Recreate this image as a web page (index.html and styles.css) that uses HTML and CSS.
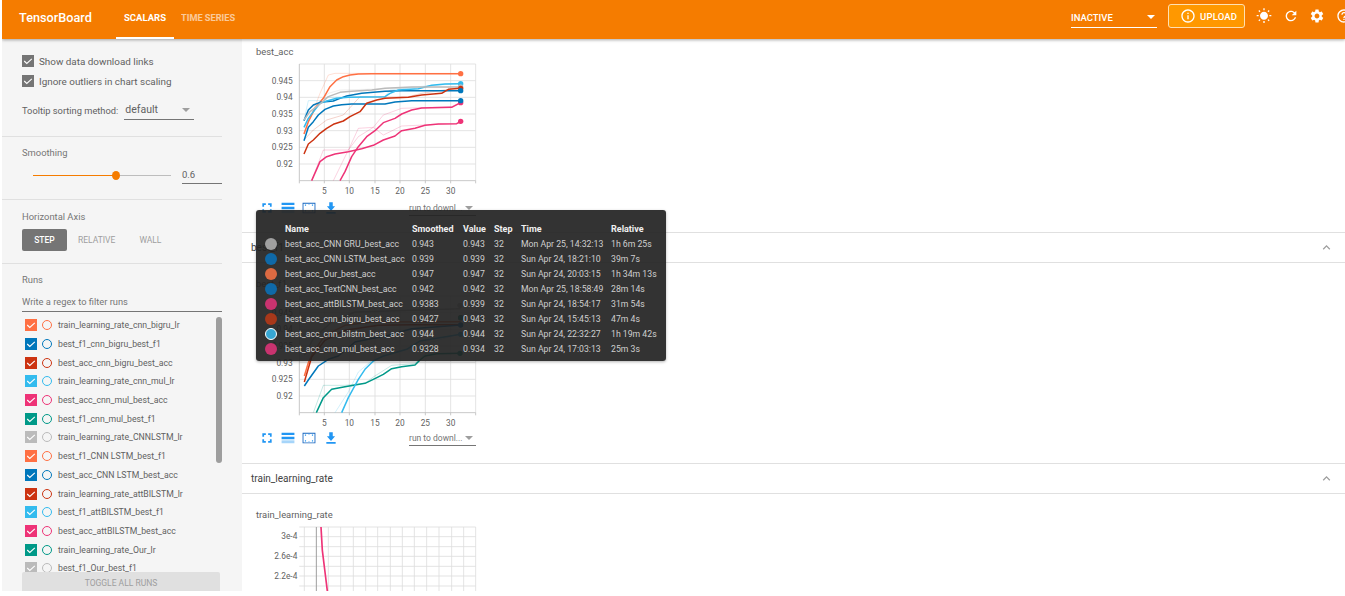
FILE: index.html
```html
<!DOCTYPE html>
<html lang="en">
<head>
    <meta charset="UTF-8">
    <meta name="viewport" content="width=device-width, initial-scale=1.0">
    <title>TensorBoard</title>
    <link rel="stylesheet" href="styles.css">
</head>
<body>
    <svg class="defs" aria-hidden="true">
        <symbol id="i-expand" viewBox="0 0 24 24"><path d="M7 14H4v6h6v-3H7v-3zm-3-4h3V7h3V4H4v6zm13 7h-3v3h6v-6h-3v3zM14 4v3h3v3h3V4h-6z"/></symbol>
        <symbol id="i-lines" viewBox="0 0 24 24"><path d="M1 3h22v4H1zM1 10h22v4H1z"/><path opacity="0.4" d="M1 16h22v5H1z"/></symbol>
        <symbol id="i-fit" viewBox="0 0 24 24"><path fill="#1565c0" d="M1 3h22v18H1zm1.5 1.5v15h19v-15z"/><path d="M5 6h2v2H5zM17 6h2v2h-2zM5 16h2v2H5zM17 16h2v2h-2zM11 6h2v1h-2zM11 17h2v1h-2z"/></symbol>
        <symbol id="i-download" viewBox="0 0 24 24"><path d="M19 9h-4V2H9v7H5l7 8 7-8zM4 19v3h16v-3H4z"/></symbol>
        <symbol id="i-chevron" viewBox="0 0 24 24"><path d="M7.41 15.41L12 10.83l4.59 4.58L18 14l-6-6-6 6z"/></symbol>
        <symbol id="i-check" viewBox="0 0 12 12"><path d="M2.2 6l2.6 2.5 5-4.6" fill="none" stroke="#fff" stroke-width="1.1"/></symbol>
        <symbol id="grid" viewBox="0 60 720 414">
            <g class="grid">
                <path d="M163 72H692M163 122H692M163 172H692M163 222H692M163 272H692M163 322H692M163 372H692"/>
                <path d="M238 72V422M313 72V422M390 72V422M465 72V422M541 72V422M617 72V422M692 72V422"/>
            </g>
            <path class="axis" d="M163 72V422H692M238 422v8M313 422v8M390 422v8M465 422v8M541 422v8M617 422v8M692 422v8M163 422v8"/>
        </symbol>
    </svg>

    <div class="app">
        <header class="topbar">
            <div class="logo">TensorBoard</div>
            <div class="tab active">SCALARS</div>
            <div class="tab">TIME SERIES</div>
            <div class="topbar-right">
                <div class="inactive"><span>INACTIVE</span><i class="arrow"></i></div>
                <div class="upload">
                    <svg viewBox="0 0 24 24"><path d="M11 7h2v2h-2zm0 4h2v6h-2zm1-9C6.48 2 2 6.48 2 12s4.48 10 10 10 10-4.48 10-10S17.52 2 12 2zm0 18c-4.41 0-8-3.59-8-8s3.59-8 8-8 8 3.59 8 8-3.59 8-8 8z"/></svg>
                    <span>UPLOAD</span>
                </div>
                <svg class="top-icon" viewBox="0 0 24 24"><path d="M6.76 4.84l-1.8-1.79-1.41 1.41 1.79 1.79 1.42-1.41zM4 10.5H1v2h3v-2zm9-9.95h-2V3.5h2V.55zm7.45 3.91l-1.41-1.41-1.79 1.79 1.41 1.41 1.79-1.79zm-3.21 13.7l1.79 1.8 1.41-1.41-1.8-1.79-1.4 1.4zM20 10.5v2h3v-2h-3zm-8-5c-3.31 0-6 2.69-6 6s2.69 6 6 6 6-2.69 6-6-2.69-6-6-6zm-1 16.95h2V19.5h-2v2.95zm-7.45-3.91l1.41 1.41 1.79-1.8-1.41-1.41-1.79 1.8z"/></svg>
                <svg class="top-icon" viewBox="0 0 24 24"><path d="M17.65 6.35C16.2 4.9 14.21 4 12 4c-4.42 0-7.99 3.58-7.99 8s3.57 8 7.99 8c3.73 0 6.84-2.55 7.73-6h-2.08c-.82 2.33-3.04 4-5.65 4-3.31 0-6-2.69-6-6s2.69-6 6-6c1.66 0 3.14.69 4.22 1.78L13 11h7V4l-2.35 2.35z"/></svg>
                <svg class="top-icon" viewBox="0 0 24 24"><path d="M19.14 12.94c.04-.3.06-.61.06-.94 0-.32-.02-.64-.07-.94l2.03-1.58c.18-.14.23-.41.12-.61l-1.92-3.32c-.12-.22-.37-.29-.59-.22l-2.39.96c-.5-.38-1.03-.7-1.62-.94l-.36-2.54c-.04-.24-.24-.41-.48-.41h-3.84c-.24 0-.43.17-.47.41l-.36 2.54c-.59.24-1.13.57-1.62.94l-2.39-.96c-.22-.08-.47 0-.59.22L2.74 8.87c-.12.21-.08.47.12.61l2.03 1.58c-.05.3-.09.63-.09.94s.02.64.07.94l-2.03 1.58c-.18.14-.23.41-.12.61l1.92 3.32c.12.22.37.29.59.22l2.39-.96c.5.38 1.03.7 1.62.94l.36 2.54c.05.24.24.41.48.41h3.84c.24 0 .44-.17.47-.41l.36-2.54c.59-.24 1.13-.56 1.62-.94l2.39.96c.22.08.47 0 .59-.22l1.92-3.32c.12-.22.07-.47-.12-.61l-2.01-1.58zM12 15.6c-1.98 0-3.6-1.62-3.6-3.6s1.62-3.6 3.6-3.6 3.6 1.62 3.6 3.6-1.62 3.6-3.6 3.6z"/></svg>
                <svg class="top-icon" viewBox="0 0 24 24"><path d="M11 18h2v-2h-2v2zm1-16C6.48 2 2 6.48 2 12s4.48 10 10 10 10-4.48 10-10S17.52 2 12 2zm0 18c-4.41 0-8-3.59-8-8s3.59-8 8-8 8 3.59 8 8-3.59 8-8 8zm0-14c-2.21 0-4 1.79-4 4h2c0-1.1.9-2 2-2s2 .9 2 2c0 2-3 1.75-3 5h2c0-2.25 3-2.5 3-5 0-2.21-1.79-4-4-4z"/></svg>
            </div>
        </header>

        <div class="layout">
            <aside class="sidebar">
                <section class="panel panel-options">
                    <label class="option"><span class="box c-grey-dark"><svg><use href="#i-check"/></svg></span>Show data download links</label>
                    <label class="option"><span class="box c-grey-dark"><svg><use href="#i-check"/></svg></span>Ignore outliers in chart scaling</label>
                    <div class="sort-row">
                        <span>Tooltip sorting method:</span>
                        <div class="sort-select"><span>default</span><i class="arrow"></i></div>
                    </div>
                </section>
                <section class="panel panel-smoothing">
                    <div class="panel-title">Smoothing</div>
                    <div class="slider-row">
                        <div class="slider"><div class="slider-fill"></div><div class="slider-thumb"></div></div>
                        <div class="slider-value">0.6</div>
                    </div>
                </section>
                <section class="panel panel-axis">
                    <div class="panel-title">Horizontal Axis</div>
                    <div class="axis-buttons">
                        <div class="axis-btn active">STEP</div>
                        <div class="axis-btn relative">RELATIVE</div>
                        <div class="axis-btn wall">WALL</div>
                    </div>
                </section>
                <section class="panel-runs">
                    <div class="panel-title">Runs</div>
                    <div class="filter">Write a regex to filter runs</div>
                    <div class="run-list">
                        <div class="scrollbar"></div>
                        <div class="run c-orange"><span class="box"><svg><use href="#i-check"/></svg></span><span class="dot"></span>train_learning_rate_cnn_bigru_lr</div>
                        <div class="run c-blue"><span class="box"><svg><use href="#i-check"/></svg></span><span class="dot"></span>best_f1_cnn_bigru_best_f1</div>
                        <div class="run c-red"><span class="box"><svg><use href="#i-check"/></svg></span><span class="dot"></span>best_acc_cnn_bigru_best_acc</div>
                        <div class="run c-cyan"><span class="box"><svg><use href="#i-check"/></svg></span><span class="dot"></span>train_learning_rate_cnn_mul_lr</div>
                        <div class="run c-pink"><span class="box"><svg><use href="#i-check"/></svg></span><span class="dot"></span>best_acc_cnn_mul_best_acc</div>
                        <div class="run c-teal"><span class="box"><svg><use href="#i-check"/></svg></span><span class="dot"></span>best_f1_cnn_mul_best_f1</div>
                        <div class="run c-grey"><span class="box"><svg><use href="#i-check"/></svg></span><span class="dot"></span>train_learning_rate_CNNLSTM_lr</div>
                        <div class="run c-orange"><span class="box"><svg><use href="#i-check"/></svg></span><span class="dot"></span>best_f1_CNN LSTM_best_f1</div>
                        <div class="run c-blue"><span class="box"><svg><use href="#i-check"/></svg></span><span class="dot"></span>best_acc_CNN LSTM_best_acc</div>
                        <div class="run c-red"><span class="box"><svg><use href="#i-check"/></svg></span><span class="dot"></span>train_learning_rate_attBILSTM_lr</div>
                        <div class="run c-cyan"><span class="box"><svg><use href="#i-check"/></svg></span><span class="dot"></span>best_f1_attBILSTM_best_f1</div>
                        <div class="run c-pink"><span class="box"><svg><use href="#i-check"/></svg></span><span class="dot"></span>best_acc_attBILSTM_best_acc</div>
                        <div class="run c-teal"><span class="box"><svg><use href="#i-check"/></svg></span><span class="dot"></span>train_learning_rate_Our_lr</div>
                        <div class="run c-grey"><span class="box"><svg><use href="#i-check"/></svg></span><span class="dot"></span>best_f1_Our_best_f1</div>
                    </div>
                    <div class="toggle-all">TOGGLE ALL RUNS</div>
                </section>
            </aside>

            <main class="main">
                <div class="card">
                    <div class="card-title">best_acc</div>
                    <svg class="chart" viewBox="33 60 687 414">
                        <use href="#grid" x="0" y="60" width="720" height="414"/>
                        <g class="ticks">
                            <text x="143" y="131">0.945</text>
                            <text x="143" y="181">0.94</text>
                            <text x="143" y="231">0.935</text>
                            <text x="143" y="281">0.93</text>
                            <text x="143" y="331">0.925</text>
                            <text x="143" y="381">0.92</text>
                        </g>
                        <g class="ticks-x">
                            <text x="238" y="462">5</text>
                            <text x="313" y="462">10</text>
                            <text x="390" y="462">15</text>
                            <text x="465" y="462">20</text>
                            <text x="541" y="462">25</text>
                            <text x="617" y="462">30</text>
                        </g>
                        <g class="faint">
                            <polyline class="s-orange" points="177,280 200,225 225,160 250,105 270,100 650,100"/>
                            <polyline class="s-grey" points="177,240 195,205 225,185 250,160 285,150 650,140"/>
                            <polyline class="s-cyan" points="177,240 190,182 225,182 245,172 420,170 435,150 520,140 650,130"/>
                            <polyline class="s-red" points="177,300 205,270 245,240 295,225 345,170 395,172 490,170 530,160 650,142"/>
                            <polyline class="s-pink" points="200,422 235,330 310,330 340,290 385,262 415,285 470,258 650,250"/>
                            <polyline class="s-pink" points="265,422 315,320 340,265 385,262 415,225 470,205 620,200 650,185"/>
                        </g>
                        <polyline class="s-orange" points="177,282 190,245 210,205 235,175 255,140 275,120 295,110 315,105 340,102 380,101 647,101"/>
                        <polyline class="s-blue" points="177,302 190,262 205,245 220,225 240,208 265,198 290,194 320,192 420,192 450,186 500,182 647,182"/>
                        <polyline class="s-blue" points="177,242 190,210 205,195 225,187 265,183 285,175 305,168 350,160 420,154 470,152 647,152"/>
                        <polyline class="s-cyan" points="177,262 190,235 205,215 225,190 245,183 275,175 310,172 420,170 435,160 460,150 520,146 560,136 600,132 647,131"/>
                        <polyline class="s-grey" points="177,240 195,215 225,192 250,170 285,157 320,154 380,150 420,145 500,141 647,141"/>
                        <polyline class="s-red" points="177,342 190,312 205,300 225,280 245,265 265,253 295,243 315,230 345,215 365,190 395,180 420,175 490,172 530,165 590,160 610,148 647,145"/>
                        <polyline class="s-pink" points="285,422 300,395 320,350 340,320 365,290 390,272 415,248 450,235 470,222 500,210 530,204 620,202 647,188"/>
                        <polyline class="s-pink" points="200,422 225,365 245,350 270,342 310,335 350,326 385,316 415,300 450,288 470,272 510,265 540,256 580,252 635,251 647,244"/>
                        <circle class="d-orange" cx="647" cy="101" r="8"/>
                        <circle class="d-cyan" cx="647" cy="131" r="8"/>
                        <circle class="d-grey" cx="647" cy="141" r="8"/>
                        <circle class="d-red" cx="647" cy="145" r="8"/>
                        <circle class="d-blue" cx="647" cy="152" r="8"/>
                        <circle class="d-pink" cx="647" cy="188" r="8"/>
                        <circle class="d-blue" cx="647" cy="182" r="8"/>
                        <circle class="d-pink" cx="647" cy="244" r="8"/>
                    </svg>
                    <div class="chart-tools">
                        <svg class="tool"><use href="#i-expand"/></svg>
                        <svg class="tool"><use href="#i-lines"/></svg>
                        <svg class="tool"><use href="#i-fit"/></svg>
                        <svg class="tool"><use href="#i-download"/></svg>
                        <div class="download-select"><span>run to downl...</span><i class="arrow"></i></div>
                    </div>
                </div>

                <div class="section-head"><span>best_f1</span><svg><use href="#i-chevron"/></svg></div>
                <div class="card card-f1">
                    <div class="card-title">best_f1</div>
                    <svg class="chart" viewBox="33 60 687 414">
                        <use href="#grid" x="0" y="60" width="720" height="414"/>
                        <g class="ticks">
                            <text x="143" y="131">0.945</text>
                            <text x="143" y="181">0.94</text>
                            <text x="143" y="231">0.935</text>
                            <text x="143" y="281">0.93</text>
                            <text x="143" y="331">0.925</text>
                            <text x="143" y="381">0.92</text>
                        </g>
                        <g class="ticks-x">
                            <text x="238" y="462">5</text>
                            <text x="313" y="462">10</text>
                            <text x="390" y="462">15</text>
                            <text x="465" y="462">20</text>
                            <text x="541" y="462">25</text>
                            <text x="617" y="462">30</text>
                        </g>
                        <g class="faint">
                            <polyline class="s-teal" points="205,422 235,340 300,340 360,334 385,315 440,280 510,275 540,245 647,244"/>
                            <polyline class="s-cyan" points="270,422 310,360 340,300 385,262 647,185"/>
                        </g>
                        <polyline class="s-grey" points="178,250 205,200 260,150 330,120 647,110"/>
                        <polyline class="s-orange" points="178,312 190,272 205,240 240,190 300,160 380,150 647,149"/>
                        <polyline class="s-red" points="178,330 200,255 240,205 300,175 400,160 500,158 647,158"/>
                        <polyline class="s-blue" points="178,342 190,324 220,282 250,262 280,252 330,210 430,190 500,170 647,159"/>
                        <polyline class="s-teal" points="214,422 235,377 260,352 300,344 360,334 385,322 415,307 440,290 470,284 510,279 525,264 540,252 575,245 647,244"/>
                        <polyline class="s-cyan" points="290,422 310,377 340,322 360,292 385,267 415,252 485,232 525,207 647,187"/>
                        <circle class="d-grey" cx="645" cy="100" r="8"/>
                        <circle class="d-red" cx="647" cy="137" r="8"/>
                        <circle class="d-teal" cx="647" cy="137" r="8"/>
                        <circle class="d-blue" cx="647" cy="159" r="8"/>
                        <circle class="d-cyan" cx="647" cy="187" r="8"/>
                        <circle class="d-teal" cx="645" cy="244" r="8"/>
                    </svg>
                    <div class="chart-tools">
                        <svg class="tool"><use href="#i-expand"/></svg>
                        <svg class="tool"><use href="#i-lines"/></svg>
                        <svg class="tool"><use href="#i-fit"/></svg>
                        <svg class="tool"><use href="#i-download"/></svg>
                        <div class="download-select"><span>run to downl...</span><i class="arrow"></i></div>
                    </div>
                </div>

                <div class="section-head"><span>train_learning_rate</span><svg><use href="#i-chevron"/></svg></div>
                <div class="card">
                    <div class="card-title">train_learning_rate</div>
                    <svg class="chart-lr" viewBox="33 183 687 210">
                        <g class="grid">
                            <path d="M178 195V400M250 195V400M287 195V400M325 195V400M362 195V400M398 195V400M436 195V400M472 195V400M508 195V400M545 195V400M582 195V400M620 195V400M656 195V400M692 195V400"/>
                            <path d="M163 195H692M163 224H692M163 254H692M163 283H692M163 313H692M163 342H692M163 372H692"/>
                        </g>
                        <path class="lr-axis" d="M214 195V400"/>
                        <g class="ticks">
                            <text x="157" y="232">3e-4</text>
                            <text x="157" y="291">2.6e-4</text>
                            <text x="157" y="350">2.2e-4</text>
                        </g>
                        <polyline class="s-pink" points="228,195 232,265 240,330 248,395"/>
                    </svg>
                </div>
            </main>
        </div>

        <div class="tooltip">
            <table>
                <colgroup>
                    <col class="col-swatch"><col class="col-name"><col class="col-smoothed"><col class="col-value"><col class="col-step"><col class="col-time"><col class="col-relative">
                </colgroup>
                <tr><th></th><th>Name</th><th>Smoothed</th><th>Value</th><th>Step</th><th>Time</th><th>Relative</th></tr>
                <tr><td><span class="swatch sw-grey"></span></td><td>best_acc_CNN GRU_best_acc</td><td>0.943</td><td>0.943</td><td>32</td><td>Mon Apr 25, 14:32:13</td><td>1h 6m 25s</td></tr>
                <tr><td><span class="swatch sw-blue"></span></td><td>best_acc_CNN LSTM_best_acc</td><td>0.939</td><td>0.939</td><td>32</td><td>Sun Apr 24, 18:21:10</td><td>39m 7s</td></tr>
                <tr><td><span class="swatch sw-orange"></span></td><td>best_acc_Our_best_acc</td><td>0.947</td><td>0.947</td><td>32</td><td>Sun Apr 24, 20:03:15</td><td>1h 34m 13s</td></tr>
                <tr><td><span class="swatch sw-blue"></span></td><td>best_acc_TextCNN_best_acc</td><td>0.942</td><td>0.942</td><td>32</td><td>Mon Apr 25, 18:58:49</td><td>28m 14s</td></tr>
                <tr><td><span class="swatch sw-pink"></span></td><td>best_acc_attBILSTM_best_acc</td><td>0.9383</td><td>0.939</td><td>32</td><td>Sun Apr 24, 18:54:17</td><td>31m 54s</td></tr>
                <tr><td><span class="swatch sw-red"></span></td><td>best_acc_cnn_bigru_best_acc</td><td>0.9427</td><td>0.943</td><td>32</td><td>Sun Apr 24, 15:45:13</td><td>47m 4s</td></tr>
                <tr><td><span class="swatch sw-cyan"></span></td><td>best_acc_cnn_bilstm_best_acc</td><td>0.944</td><td>0.944</td><td>32</td><td>Sun Apr 24, 22:32:27</td><td>1h 19m 42s</td></tr>
                <tr><td><span class="swatch sw-pink"></span></td><td>best_acc_cnn_mul_best_acc</td><td>0.9328</td><td>0.934</td><td>32</td><td>Sun Apr 24, 17:03:13</td><td>25m 3s</td></tr>
            </table>
        </div>
    </div>
</body>
</html>
```

FILE: styles.css
```css
* {
    box-sizing: border-box;
}

html, body {
    margin: 0;
    padding: 0;
    height: 100%;
    overflow: hidden;
    background: #fff;
}

body {
    padding-left: 2px;
    font-family: Roboto, "Liberation Sans", sans-serif;
    font-size: 10px;
    color: #616161;
}

.defs {
    position: absolute;
    width: 0;
    height: 0;
}

.app {
    position: relative;
    height: 591px;
    overflow: hidden;
    display: flex;
    flex-direction: column;
}

.arrow {
    display: block;
    width: 0;
    height: 0;
    border-left: 4px solid transparent;
    border-right: 4px solid transparent;
    border-top: 4px solid #9e9e9e;
}

/* top bar */
.topbar {
    position: relative;
    z-index: 2;
    flex: none;
    height: 39px;
    display: flex;
    align-items: center;
    background: #f57c00;
    color: #fff;
    box-shadow: 0 1px 3px rgba(0, 0, 0, 0.35);
    overflow: hidden;
}

.logo {
    width: 114px;
    padding: 0 0 5px 17px;
    font-size: 12.7px;
    font-weight: 500;
}

.tab {
    align-self: stretch;
    display: flex;
    align-items: center;
    padding: 0 8px 5px;
    font-size: 9.2px;
    font-weight: 700;
    opacity: 0.6;
}

.tab.active {
    width: 58px;
    justify-content: center;
    margin-right: -1px;
    padding-bottom: 3px;
    opacity: 1;
    border-bottom: 2px solid #fff;
    font-size: 9.5px;
}

.topbar-right {
    margin-left: auto;
    margin-bottom: 7px;
    display: flex;
    align-items: center;
    gap: 11px;
    margin-right: -6px;
}

.inactive {
    width: 86px;
    height: 20px;
    display: flex;
    align-items: center;
    justify-content: space-between;
    padding-right: 2px;
    margin-top: 3px;
    border-bottom: 1px solid #fff;
    font-size: 9.5px;
    font-weight: 500;
}

.inactive .arrow {
    border-top-color: #fff;
}

.upload {
    width: 77px;
    height: 24px;
    display: flex;
    align-items: center;
    gap: 4px;
    padding-left: 11px;
    background: #ff9800;
    border: 1px solid #ffe0b2;
    border-radius: 3px;
    font-size: 9.5px;
    font-weight: 500;
    letter-spacing: 0.2px;
}

.upload svg {
    width: 16px;
    height: 16px;
    fill: #fff;
}

.top-icon {
    flex: none;
    width: 16px;
    height: 16px;
    margin-right: -0.5px;
    fill: #fff;
}

/* sidebar */
.layout {
    flex: 1;
    min-height: 0;
    display: flex;
}

.sidebar {
    flex: none;
    width: 240px;
    background: #f5f5f5;
    display: flex;
    flex-direction: column;
}

.panel {
    width: 220px;
    padding-left: 20px;
    border-bottom: 1px solid #e0e0e0;
}

.panel-title {
    font-size: 9.4px;
    line-height: 12px;
    color: #757575;
}

.panel-options {
    height: 98px;
    padding-top: 12px;
}

.option {
    height: 20px;
    display: flex;
    align-items: center;
    gap: 5px;
    font-size: 9.9px;
}

.box {
    flex: none;
    width: 12px;
    height: 12px;
    display: block;
}

.box svg {
    display: block;
    width: 12px;
    height: 12px;
}

.box.c-grey-dark { background: #757575; }
.c-orange .box { background: #ff7043; }
.c-blue .box { background: #0077bb; }
.c-red .box { background: #cc3311; }
.c-cyan .box { background: #33bbee; }
.c-pink .box { background: #ee3377; }
.c-teal .box { background: #009988; }
.c-grey .box { background: #bbbbbb; }

.sort-row {
    margin-top: 9px;
    display: flex;
    align-items: center;
    gap: 6px;
    font-size: 9.3px;
}

.sort-select {
    width: 70px;
    height: 20px;
    display: flex;
    align-items: center;
    justify-content: space-between;
    padding: 0 4px 0 1px;
    border-bottom: 1px solid #757575;
    font-size: 10.5px;
}

.panel-smoothing {
    height: 63px;
    padding-top: 10px;
}

.slider-row {
    margin-top: 9px;
    display: flex;
    align-items: center;
}

.slider {
    position: relative;
    margin-left: 11px;
    width: 138px;
    height: 1px;
    margin-top: -2px;
    background: #bdbdbd;
}

.slider-fill {
    width: 83px;
    height: 1px;
    background: #f57c00;
}

.slider-thumb {
    position: absolute;
    left: 79px;
    top: -4px;
    width: 8px;
    height: 9px;
    border-radius: 50%;
    background: #f57c00;
}

.slider-value {
    margin-left: 11px;
    width: 40px;
    height: 16px;
    padding-top: 1px;
    border-bottom: 1px solid #757575;
    font-size: 9.5px;
}

.panel-axis {
    height: 64px;
    padding-top: 11px;
}

.axis-buttons {
    margin-top: 6px;
    display: flex;
    align-items: center;
    font-size: 8.5px;
    color: #9e9e9e;
}

.axis-btn {
    height: 22px;
    line-height: 22px;
}

.axis-btn.active {
    width: 45px;
    text-align: center;
    color: #fff;
    font-weight: 500;
    background: #757575;
    border-radius: 2px;
}

.axis-btn.relative {
    margin-left: 11px;
}

.axis-btn.wall {
    margin-left: 24px;
}

.panel-runs {
    flex: 1;
    min-height: 0;
    position: relative;
    padding: 10px 0 0 20px;
    overflow: hidden;
}

.filter {
    width: 200px;
    height: 19px;
    margin-top: 7px;
    padding-top: 3px;
    border-bottom: 1px solid #757575;
    font-size: 9.3px;
    color: #757575;
}

.run-list {
    position: relative;
    margin-top: 4px;
    padding-left: 3px;
}

.run {
    height: 18.69px;
    display: flex;
    align-items: center;
    font-size: 8.7px;
    white-space: nowrap;
}

.dot {
    flex: none;
    width: 10px;
    height: 10px;
    margin: 0 6px 0 5px;
    border: 1px solid;
    border-radius: 50%;
}

.c-orange .dot { border-color: #ff7043; }
.c-blue .dot { border-color: #0077bb; }
.c-red .dot { border-color: #cc3311; }
.c-cyan .dot { border-color: #33bbee; }
.c-pink .dot { border-color: #ee3377; }
.c-teal .dot { border-color: #009988; }
.c-grey .dot { border-color: #bbbbbb; }

.scrollbar {
    position: absolute;
    left: 194px;
    top: 1px;
    width: 6px;
    height: 146px;
    border-radius: 3px;
    background: #9e9e9e;
}

.toggle-all {
    position: absolute;
    left: 20px;
    bottom: 0;
    width: 198px;
    height: 19px;
    line-height: 23px;
    text-align: center;
    background: #e0e0e0;
    border-radius: 2px 2px 0 0;
    font-size: 8.5px;
    color: #9e9e9e;
}

/* charts */
.main {
    flex: 1;
    min-width: 0;
    overflow: hidden;
    padding-top: 6px;
    color: #616161;
}

.card {
    padding-left: 14px;
}

.card-title {
    height: 15px;
    line-height: 13px;
    font-size: 9.4px;
    color: #616161;
}

.chart {
    display: block;
    width: 229px;
    height: 138px;
}

.chart-lr {
    display: block;
    width: 229px;
    height: 70px;
}

.chart polyline, .chart-lr polyline {
    fill: none;
    stroke-width: 4.5;
    stroke-linejoin: round;
}

.chart-lr polyline {
    stroke-width: 5;
}

.chart .faint polyline {
    stroke-width: 3;
    opacity: 0.22;
}

.s-orange { stroke: #ff7043; }
.s-blue { stroke: #0077bb; }
.s-red { stroke: #cc3311; }
.s-cyan { stroke: #33bbee; }
.s-pink { stroke: #ee3377; }
.s-teal { stroke: #009988; }
.s-grey { stroke: #bbbbbb; }

.d-orange { fill: #ff7043; }
.d-blue { fill: #0077bb; }
.d-red { fill: #cc3311; }
.d-cyan { fill: #33bbee; }
.d-pink { fill: #ee3377; }
.d-teal { fill: #009988; }
.d-grey { fill: #bbbbbb; }

.grid path {
    fill: none;
    stroke: #dddddd;
    stroke-width: 2.5;
}

.axis {
    fill: none;
    stroke: #bdbdbd;
    stroke-width: 2.5;
}

.lr-axis {
    fill: none;
    stroke: #9e9e9e;
    stroke-width: 3;
}

.ticks text {
    text-anchor: end;
    font-size: 25px;
    fill: #616161;
}

.ticks-x text {
    text-anchor: middle;
    font-size: 25px;
    fill: #616161;
}

.chart-tools {
    margin-top: 2px;
    height: 16px;
    width: 220px;
    display: flex;
    align-items: center;
    padding-left: 4px;
    gap: 7.2px;
}

.card-f1 {
    padding-bottom: 1px;
}

.card-f1 .chart-tools {
    margin-top: 0;
}

.tool {
    flex: none;
    width: 14px;
    height: 14px;
    fill: #2196f3;
}

.download-select {
    width: 67px;
    height: 16px;
    margin-left: auto;
    display: flex;
    align-items: center;
    justify-content: space-between;
    padding-right: 3px;
    border-bottom: 1px solid #757575;
    font-size: 8.5px;
    color: #757575;
}

.download-select span {
    white-space: nowrap;
}

.section-head {
    height: 31px;
    margin-top: 16px;
    padding: 0 9px;
    display: flex;
    align-items: center;
    justify-content: space-between;
    border-top: 1px solid #e0e0e0;
    border-bottom: 1px solid #e0e0e0;
    font-size: 10px;
    color: #424242;
}

.section-head + .card {
    padding-top: 14px;
}

.section-head svg {
    width: 15px;
    height: 15px;
    margin-right: 2px;
    fill: #9e9e9e;
}

/* tooltip over the charts */
.tooltip {
    position: absolute;
    z-index: 3;
    left: 254px;
    top: 210px;
    width: 410px;
    height: 151px;
    padding: 11px 0 0 6px;
    background: rgba(34, 34, 34, 0.92);
    border-radius: 3px;
    box-shadow: 0 1px 3px rgba(0, 0, 0, 0.3);
    color: #cfcfcf;
    font-size: 8.7px;
}

.tooltip table {
    width: 404px;
    table-layout: fixed;
    border-collapse: collapse;
}

.tooltip th {
    height: 15px;
    padding: 0;
    text-align: left;
    color: #f0f0f0;
    font-weight: 700;
    font-size: 9px;
}

.tooltip td {
    height: 15px;
    padding: 0;
    white-space: nowrap;
}

.col-swatch { width: 23px; }
.col-name { width: 127px; }
.col-smoothed { width: 51px; }
.col-value { width: 31px; }
.col-step { width: 27px; }
.col-time { width: 90px; }
.col-relative { width: 55px; }

.swatch {
    display: block;
    width: 12px;
    height: 12px;
    margin-left: 3px;
    border-radius: 50%;
}

.sw-grey { background: #a0a0a0; }
.sw-blue { background: #0f69a8; }
.sw-orange { background: #dc6a42; }
.sw-pink { background: #c9336f; }
.sw-red { background: #a8381a; }
.sw-cyan { background: #37a7d4; border: 1px solid #fff; }
```
